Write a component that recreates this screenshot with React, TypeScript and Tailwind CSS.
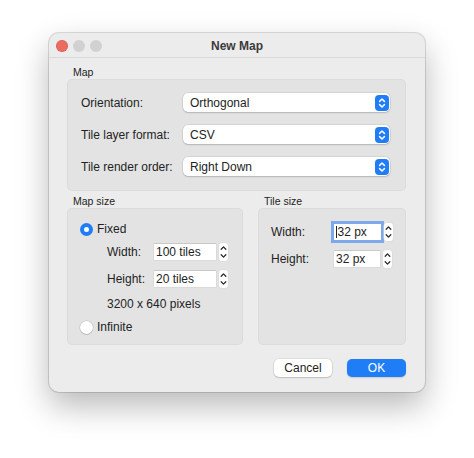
import React from "react";

function BlueStepper() {
  return (
    <svg width="14" height="16" viewBox="0 0 14 16" className="shrink-0">
      <rect width="14" height="16" rx="4" fill="#1f7ef5" />
      <path d="M4.6 6.4 L7 4 L9.4 6.4" stroke="white" strokeWidth="1.5" fill="none" strokeLinecap="round" strokeLinejoin="round" />
      <path d="M4.6 9.6 L7 12 L9.4 9.6" stroke="white" strokeWidth="1.5" fill="none" strokeLinecap="round" strokeLinejoin="round" />
    </svg>
  );
}

function SmallStepper() {
  return (
    <svg width="11" height="20" viewBox="0 0 11 20" className="shrink-0">
      <rect x="0.5" y="0.5" width="10" height="19" rx="4" fill="white" stroke="rgba(0,0,0,0.08)" />
      <path d="M3.2 7.2 L5.5 4.9 L7.8 7.2" stroke="#2b2b2b" strokeWidth="1.3" fill="none" strokeLinecap="round" strokeLinejoin="round" />
      <path d="M3.2 12.8 L5.5 15.1 L7.8 12.8" stroke="#2b2b2b" strokeWidth="1.3" fill="none" strokeLinecap="round" strokeLinejoin="round" />
    </svg>
  );
}

function Select({ value }: { value: string }) {
  return (
    <div className="flex h-[19px] flex-1 items-center justify-between rounded-[5px] bg-white pl-[7px] pr-[1px] shadow-[0_0_0_0.5px_rgba(0,0,0,0.12),0_1px_1.5px_rgba(0,0,0,0.15)]">
      <span>{value}</span>
      <BlueStepper />
    </div>
  );
}

function SelectRow({ label, value }: { label: string; value: string }) {
  return (
    <div className="flex items-center">
      <span className="w-[102px]">{label}</span>
      <Select value={value} />
    </div>
  );
}

function Radio({ checked, label }: { checked?: boolean; label: string }) {
  return (
    <div className="flex h-[14px] items-center gap-[4px]">
      {checked ? (
        <span className="flex h-[13px] w-[13px] items-center justify-center rounded-full bg-[#1f7ef5]">
          <span className="h-[5px] w-[5px] rounded-full bg-white" />
        </span>
      ) : (
        <span className="h-[13px] w-[13px] rounded-full bg-white shadow-[0_0_0_0.5px_rgba(0,0,0,0.15),0_1px_1px_rgba(0,0,0,0.12)]" />
      )}
      <span>{label}</span>
    </div>
  );
}

function NumField({ value, width, focused }: { value: string; width: string; focused?: boolean }) {
  return (
    <div className="flex items-center gap-[2px]">
      <div
        className={
          focused
            ? "flex h-[16px] items-center bg-white pl-[2px] shadow-[0_0_0_3px_rgba(90,150,235,0.75)] " + width
            : "flex h-[16px] items-center bg-white pl-[2px] shadow-[0_-0.5px_0_rgba(0,0,0,0.15),0_0_0_0.5px_rgba(0,0,0,0.08)] " + width
        }
      >
        {focused && <span className="mr-[0.5px] h-[12px] w-[1px] bg-[#222]" />}
        <span>{value}</span>
      </div>
      <SmallStepper />
    </div>
  );
}

export default function App() {
  return (
    <div className="min-h-[458px] w-[474px] bg-white pl-[49px] pt-[33px] font-['Liberation_Sans',Arial,sans-serif] text-[12px] leading-[14px] text-[#232323]">
      <div className="flex h-[359px] w-[376px] flex-col rounded-[10px] bg-[#ececec] shadow-[0_0_0_1px_rgba(0,0,0,0.13),0_14px_32px_rgba(0,0,0,0.28)]">
        {/* Title bar */}
        <div className="grid h-[25px] shrink-0 grid-cols-[1fr_auto_1fr] items-center border-b border-[#d9d9d9]">
          <div className="flex items-center gap-[5px] pl-[7px] pt-[1px]">
            <span className="h-[12px] w-[12px] rounded-full bg-[#ed6a5e] shadow-[inset_0_0_0_0.5px_rgba(0,0,0,0.15)]" />
            <span className="h-[12px] w-[12px] rounded-full bg-[#d1d1d1]" />
            <span className="h-[12px] w-[12px] rounded-full bg-[#d1d1d1]" />
          </div>
          <span className="pt-[1px] font-bold text-[#3b3b3b]">New Map</span>
          <div />
        </div>

        {/* Body */}
        <div className="flex flex-1 flex-col pl-[18px] pr-[19px]">
          <div className="pl-[6px] pt-[7px] text-[10.5px] leading-[14px]">Map</div>
          <div className="flex flex-col gap-[13px] rounded-[5px] bg-[#e3e3e3] pb-[15px] pl-[14px] pr-[16px] pt-[14px] shadow-[inset_0_0_0_1px_rgba(0,0,0,0.035)]">
            <SelectRow label="Orientation:" value="Orthogonal" />
            <SelectRow label="Tile layer format:" value="CSV" />
            <SelectRow label="Tile render order:" value="Right Down" />
          </div>

          <div className="mt-[3px] flex gap-[15px]">
            {/* Map size */}
            <div className="flex w-[176px] flex-col">
              <div className="pl-[6px] text-[10.5px] leading-[14px]">Map size</div>
              <div className="flex h-[137px] flex-col rounded-[5px] bg-[#e3e3e3] pl-[13px] pt-[14px] shadow-[inset_0_0_0_1px_rgba(0,0,0,0.035)]">
                <Radio checked label="Fixed" />
                <div className="ml-[27px] mt-[6px] flex h-[20px] items-center">
                  <span className="w-[47px]">Width:</span>
                  <NumField value="100 tiles" width="w-[62px]" />
                </div>
                <div className="ml-[27px] mt-[7px] flex h-[20px] items-center">
                  <span className="w-[47px]">Height:</span>
                  <NumField value="20 tiles" width="w-[62px]" />
                </div>
                <div className="ml-[27px] mt-[8px]">3200 x 640 pixels</div>
                <div className="mt-[9px]">
                  <Radio label="Infinite" />
                </div>
              </div>
            </div>

            {/* Tile size */}
            <div className="flex flex-1 flex-col">
              <div className="pl-[6px] text-[10.5px] leading-[14px]">Tile size</div>
              <div className="flex h-[137px] flex-col rounded-[5px] bg-[#e3e3e3] pl-[13px] pt-[14px] shadow-[inset_0_0_0_1px_rgba(0,0,0,0.035)]">
                <div className="flex h-[20px] items-center">
                  <span className="w-[63px]">Width:</span>
                  <NumField value="32 px" width="w-[47px]" focused />
                </div>
                <div className="mt-[7px] flex h-[20px] items-center">
                  <span className="w-[63px]">Height:</span>
                  <NumField value="32 px" width="w-[46px]" />
                </div>
              </div>
            </div>
          </div>

          <div className="mt-[14px] flex justify-end gap-[15px] pr-[0px]">
            <button className="flex h-[18px] w-[58px] items-center justify-center rounded-[5px] bg-white text-[#232323] shadow-[0_0_0_0.5px_rgba(0,0,0,0.12),0_1px_1.5px_rgba(0,0,0,0.15)]">
              Cancel
            </button>
            <button className="flex h-[18px] w-[59px] items-center justify-center rounded-[5px] bg-[#1f7ef5] text-white shadow-[0_1px_1.5px_rgba(0,0,0,0.15)]">
              OK
            </button>
          </div>
        </div>
      </div>
    </div>
  );
}
